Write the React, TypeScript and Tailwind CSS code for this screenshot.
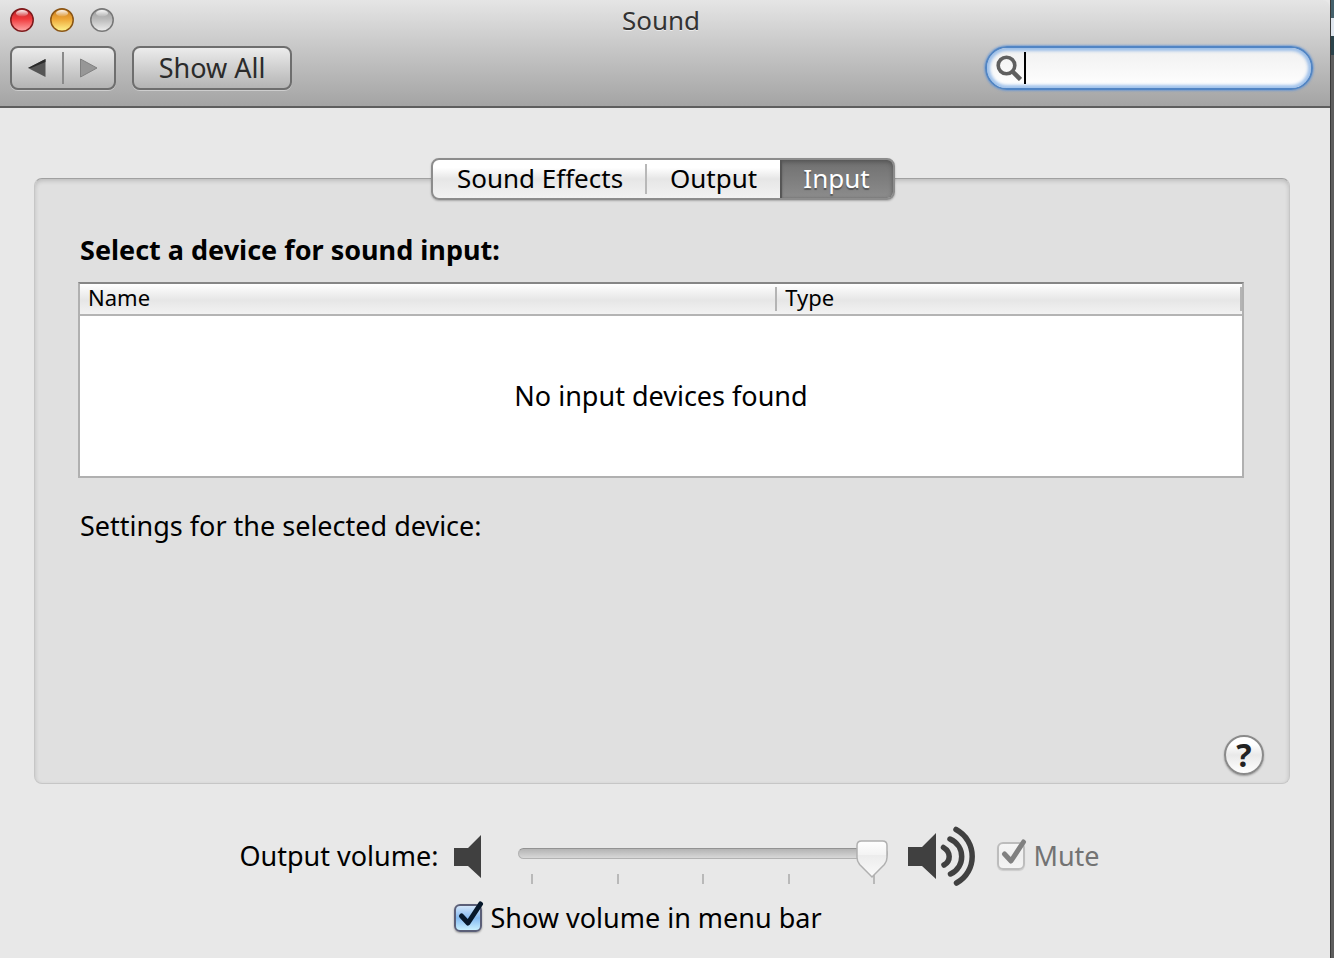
import { useState } from "react";
import type { ReactNode } from "react";

const tabs = ["Sound Effects", "Output", "Input"];

function TrafficLight({ id, label, rim, top, mid, bottom }: { id: string; label: string; rim: string; top: string; mid: string; bottom: string }) {
  return (
    <button type="button" aria-label={label} className="h-6 w-6">
      <svg viewBox="0 0 24 24" className="h-6 w-6">
        <defs>
          <linearGradient id={`${id}-fill`} x1="0" y1="0" x2="0" y2="1">
            <stop offset="0" stopColor={top} />
            <stop offset="0.45" stopColor={mid} />
            <stop offset="1" stopColor={bottom} />
          </linearGradient>
          <linearGradient id={`${id}-shine`} x1="0" y1="0" x2="0" y2="1">
            <stop offset="0" stopColor="#fff" stopOpacity="0.95" />
            <stop offset="1" stopColor="#fff" stopOpacity="0.1" />
          </linearGradient>
        </defs>
        <circle cx="12" cy="12.8" r="11.2" fill="#fff" opacity="0.45" />
        <circle cx="12" cy="12" r="11.2" fill={`url(#${id}-fill)`} stroke={rim} strokeWidth="1.5" />
        <ellipse cx="12" cy="5.2" rx="6" ry="3.2" fill={`url(#${id}-shine)`} />
      </svg>
    </button>
  );
}

function CheckBox({ id, checked, disabled, onChange, children }: { id: string; checked: boolean; disabled?: boolean; onChange?: (value: boolean) => void; children: ReactNode }) {
  return (
    <div className="flex items-center gap-2">
      <span className="relative h-7 w-7">
        <input
          id={id}
          type="checkbox"
          checked={checked}
          disabled={disabled}
          onChange={(event) => onChange?.(event.target.checked)}
          className="block h-7 w-7 appearance-none rounded-md border-2 border-[#5b5f78] bg-linear-to-b from-[#d3e6fa] via-[#84b9f0] to-[#c9f0ff] shadow-[0_1px_2px_rgba(0,0,0,0.35)] disabled:border-[#bdbdbd] disabled:from-[#f6f6f6] disabled:via-[#efefef] disabled:to-[#f4f4f4] disabled:shadow-[0_1px_1px_rgba(0,0,0,0.12)]"
        />
        {checked ? (
          <svg viewBox="0 0 32 32" className="pointer-events-none absolute -top-1 left-0 h-8 w-8" fill="none" stroke={disabled ? "#808080" : "#07182b"} strokeWidth="5" strokeLinecap="round" strokeLinejoin="round">
            <path d="M7.5 16L14 23L26.500 4" />
          </svg>
        ) : null}
      </span>
      <label htmlFor={id} className={disabled ? "text-[#737373]" : "text-black"}>
        {children}
      </label>
    </div>
  );
}

function VolumeSlider({ value, onChange }: { value: number; onChange: (value: number) => void }) {
  return (
    <div className="relative h-11 w-[370px] pt-2">
      <div className="h-[11px] rounded-full border border-[#b2b2b2] border-t-[#929292] bg-linear-to-b from-[#b4b4b4] to-[#d8d8d8]" />
      <div className="mt-[15px] flex justify-between px-[13px]">
        {[0, 25, 50, 75, 100].map((tick) => (
          <span key={tick} className="h-[10px] w-0.5 bg-[#b9b9b9]" />
        ))}
      </div>
      <div className="pointer-events-none absolute inset-y-0 left-0 right-8">
        <svg viewBox="0 0 32 40" className="absolute top-0 h-10 w-8" style={{ left: `${value}%` }}>
          <defs>
            <linearGradient id="thumb" x1="0" y1="0" x2="0" y2="1">
              <stop offset="0" stopColor="#fff" />
              <stop offset="0.38" stopColor="#f3f3f3" />
              <stop offset="0.4" stopColor="#ececec" />
              <stop offset="1" stopColor="#fafafa" />
            </linearGradient>
          </defs>
          <path d="M5.5 1h21c3 0 4.500 1.500 4.500 4.500v12c0 3-.8 4.800-2.600 7L16 37L3.600 24.500C1.800 22.300 1 20.500 1 17.500v-12C1 2.500 2.500 1 5.500 1z" fill="url(#thumb)" stroke="#b0b0b0" strokeWidth="1.5" />
        </svg>
      </div>
      <input
        id="output-volume"
        type="range"
        min={0}
        max={100}
        value={value}
        onChange={(event) => onChange(Number(event.target.value))}
        className="absolute inset-0 h-full w-full cursor-default opacity-0"
      />
    </div>
  );
}

export default function App() {
  const [activeTab, setActiveTab] = useState("Input");
  const [query, setQuery] = useState("");
  const [volume, setVolume] = useState(100);
  const [showInMenuBar, setShowInMenuBar] = useState(true);

  return (
    <div className="flex min-h-screen bg-[#e8e8e8] font-['Noto_Sans',sans-serif] text-[27px] leading-8 text-black">
      <div className="flex min-w-0 flex-1 flex-col">
        <header className="rounded-tr-lg border-b-2 border-[#5e5e5e] bg-linear-to-b from-[#e5e5e5] to-[#a4a4a4] px-[10px] pb-4 pt-1">
          <div className="grid grid-cols-[1fr_auto_1fr] items-center pr-2">
            <div className="flex gap-4">
              <TrafficLight id="close" label="Close" rim="#7d1a1c" top="#b32226" mid="#f03a3c" bottom="#ffa9a9" />
              <TrafficLight id="minimize" label="Minimize" rim="#8a5515" top="#c67a1d" mid="#eda535" bottom="#fff58e" />
              <TrafficLight id="zoom" label="Zoom" rim="#777777" top="#9b9b9b" mid="#b9b9b9" bottom="#eeeeee" />
            </div>
            <h1 className="text-[26px] leading-8 text-[#333333] [text-shadow:0_1px_0_rgba(255,255,255,0.6)]">Sound</h1>
          </div>

          <div className="mt-[10px] flex items-center gap-4">
            <div className="flex h-11 w-[106px] items-center rounded-lg border-2 border-[#6e6e6e] bg-linear-to-b from-[#ececec] to-[#b4b4b4] shadow-[0_1px_0_rgba(255,255,255,0.4)]">
              <button type="button" aria-label="Back" className="flex flex-1 justify-center">
                <svg viewBox="0 0 18 20" className="h-5 w-[18px]">
                  <path d="M0 10L17.500 1v18z" fill="#555" />
                  <path d="M0 10L17.500 1v3L3 10z" fill="#2a2a2a" />
                </svg>
              </button>
              <span className="h-8 w-0.5 bg-[#8a8a8a]" />
              <button type="button" aria-label="Forward" className="flex flex-1 justify-center">
                <svg viewBox="0 0 18 20" className="h-5 w-[18px]">
                  <path d="M.5 1L17 10L.5 19z" fill="#979797" stroke="#808080" strokeWidth="1" />
                </svg>
              </button>
            </div>
            <button type="button" className="h-11 w-40 rounded-lg border-2 border-[#6e6e6e] bg-linear-to-b from-[#ececec] to-[#b4b4b4] text-[#2b2b2b] shadow-[0_1px_0_rgba(255,255,255,0.4)]">
              Show All
            </button>
            <div className="ml-auto mr-[7px] flex h-11 w-[328px] items-center rounded-full border-2 border-[#5185c4] bg-linear-to-b from-[#f0f0f0] to-white pl-[9px] pr-4 shadow-[0_0_2px_1px_rgba(100,150,215,0.75),inset_0_0_3px_3px_rgba(130,175,230,0.75)]">
              <svg viewBox="0 0 26 26" className="h-[26px] w-[26px] shrink-0" fill="none" stroke="#5f5f5f">
                <circle cx="10.5" cy="10.5" r="8.3" strokeWidth="3.6" />
                <path d="M16.500 16.500L24.500 24.500" strokeWidth="4.5" />
              </svg>
              <span className="ml-0.5 h-8 w-0.5 shrink-0 bg-black" />
              <input type="search" aria-label="Search" value={query} onChange={(event) => setQuery(event.target.value)} className="min-w-0 flex-1 appearance-none bg-transparent pl-1 outline-none" />
            </div>
          </div>
        </header>

        <main className="flex flex-1 flex-col pb-5 pl-[34px] pr-10 pt-[50px]">
          <div role="tablist" className="z-10 ml-0.5 flex h-[42px] self-center rounded-lg border-2 border-[#8c8c8c] bg-linear-to-b from-white from-20% via-[#e6e6e6] via-50% to-[#f2f2f2] text-[26px] shadow-[0_1px_2px_rgba(0,0,0,0.25)]">
            {tabs.map((tab, index) => (
              <button
                key={tab}
                type="button"
                role="tab"
                aria-selected={tab === activeTab}
                onClick={() => setActiveTab(tab)}
                className={`relative flex items-center justify-center pb-0.5 ${index === 0 ? "w-[214px] rounded-l-md" : index === 1 ? "w-[133px]" : "w-[113px] rounded-r-md"} ${
                  tab === activeTab ? "bg-linear-to-b from-[#707070] to-[#8c8c8c] text-white shadow-[inset_2px_0_1px_#555555,inset_0_2px_4px_#555555] [text-shadow:0_2px_1px_rgba(0,0,0,0.35)]" : ""
                }`}
              >
                {tab}
                {index === 0 ? <span className="absolute right-0 top-1 h-[30px] w-0.5 bg-[#b8b8b8]" /> : null}
              </button>
            ))}
          </div>

          <section className="-mt-[22px] flex min-h-[606px] flex-col rounded-lg border border-[#c6c6c6] border-t-[#a0a0a0] bg-[#e0e0e0] pb-2 pl-[43px] pr-[45px] pt-[55px] shadow-[inset_0_2px_4px_rgba(0,0,0,0.16)]">
            <h2 className="pl-0.5 font-bold">Select a device for sound input:</h2>
            <table className="mt-4 w-full table-fixed border-separate border-spacing-0 border-2 border-[#b0b0b0] border-t-[#858585] bg-white">
              <colgroup>
                <col className="w-[60%]" />
                <col />
              </colgroup>
              <thead className="text-left text-[22px] leading-7">
                <tr className="bg-linear-to-b from-white via-[#e6e6e6] via-50% to-[#f4f4f4]">
                  <th scope="col" className="border-b-2 border-[#b4b4b4] p-0 font-normal">
                    <div className="flex h-[30px] items-center justify-between pl-2">
                      <span className="pb-1">Name</span>
                      <span className="h-6 w-0.5 bg-[#b4b4b4]" />
                    </div>
                  </th>
                  <th scope="col" className="border-b-2 border-[#b4b4b4] p-0 font-normal">
                    <div className="flex h-[30px] items-center justify-between pl-2">
                      <span className="pb-1">Type</span>
                      <span className="h-6 w-0.5 bg-[#b4b4b4]" />
                    </div>
                  </th>
                </tr>
              </thead>
              <tbody>
                <tr>
                  <td colSpan={2} className="h-[160px] p-0 text-center">
                    No input devices found
                  </td>
                </tr>
              </tbody>
            </table>
            <p className="mt-8 pl-0.5">Settings for the selected device:</p>
            <button type="button" aria-label="Help" className="-mr-5 mt-auto flex h-10 w-10 items-center justify-center self-end rounded-full border-2 border-[#8a8a8a] bg-linear-to-b from-white from-20% via-[#e9e9e9] via-50% to-white text-[32px] font-bold text-[#222222] shadow-[0_1px_2px_rgba(0,0,0,0.3)]">
              ?
            </button>
          </section>

          <div className="mt-10 grid grid-cols-[214px_auto] justify-center gap-x-4">
            <label htmlFor="output-volume" className="self-center whitespace-nowrap text-right">
              Output volume:
            </label>
            <div className="flex h-16 items-center">
              <svg viewBox="0 0 27 43" className="h-[43px] w-[27px]">
                <path d="M0 13h14L27 0v43L14 31H0z" fill="#404040" />
              </svg>
              <div className="ml-[37px] mt-3">
                <VolumeSlider value={volume} onChange={setVolume} />
              </div>
              <svg viewBox="0 0 68 60" className="ml-5 h-[60px] w-[68px]">
                <path d="M0 21h14L28 7v46L14 40H0z" fill="#404040" />
                <g fill="none" stroke="#404040" strokeWidth="5.5" strokeLinecap="round">
                  <path d="M35.500 21.500C43 26 43 35 36 39" />
                  <path d="M42 13C57.500 20 57.500 41 42.500 48" />
                  <path d="M48 3.500C69.500 15 69.500 45.500 48.500 57" />
                </g>
              </svg>
              <div className="ml-[21px]">
                <CheckBox id="mute" checked disabled>
                  Mute
                </CheckBox>
              </div>
            </div>
            <div className="col-start-2 mt-[14px]">
              <CheckBox id="show-volume" checked={showInMenuBar} onChange={setShowInMenuBar}>
                Show volume in menu bar
              </CheckBox>
            </div>
          </div>
        </main>
      </div>

      {/* sliver of the window behind */}
      <div className="flex w-1 shrink-0 flex-col border-l border-[#3a3a3a] bg-[#5e5e5e]">
        <span className="h-[18px] bg-[#44606b]" />
        <span className="h-[18px] bg-[#dfe6ee]" />
        <span className="h-[19px] bg-[#2b434b]" />
      </div>
    </div>
  );
}
